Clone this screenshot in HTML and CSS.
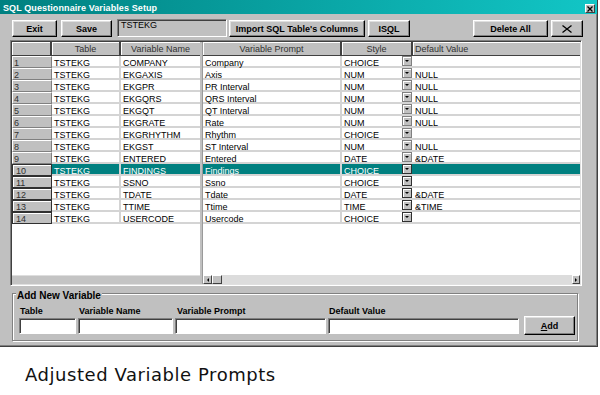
FILE: index.html
```html
<!DOCTYPE html>
<html lang="en">
  <head>
    <meta charset="UTF-8" />
    <title>SQL Questionnaire Variables Setup</title>
    <link rel="stylesheet" href="styles.css">
  </head>
  <body>
    <div class="window">
      <div class="titlebar">
        <span class="titlebar__text">SQL Questionnaire Variables Setup</span>
        <span class="titlebar__close">
          <svg width="6" height="6" viewBox="0 0 6 6"><path d="M0.5 0.5L5.5 5.5M5.5 0.5L0.5 5.5" stroke="#000" stroke-width="1.3"/></svg>
        </span>
      </div>

      <div class="toolbar">
        <button class="btn btn--exit" type="button">Exit</button>
        <button class="btn btn--save" type="button">Save</button>
        <div class="table-field">TSTEKG</div>
        <button class="btn btn--import" type="button">Import SQL Table's Columns</button>
        <button class="btn btn--isql" type="button">IS<u>Q</u>L</button>
        <button class="btn btn--delete" type="button">Delete All</button>
        <button class="btn btn--close" type="button">
          <svg width="10" height="8" viewBox="0 0 10 8"><path d="M0.5 0.5L9.5 7.5M9.5 0.5L0.5 7.5" stroke="#000" stroke-width="1.3"/></svg>
        </button>
      </div>

      <!-- variables grid: fixed left pane + scrolling right pane -->
      <div class="grid">
        <div class="pane pane--left">
          <div class="row row--head">
            <span class="hc c-rh"></span>
            <span class="hc c-tbl">Table</span>
            <span class="hc c-var">Variable Name</span>
          </div>
          <div class="row"><span class="rh">1</span><span class="cell c-tbl">TSTEKG</span><span class="cell c-var">COMPANY</span></div>
          <div class="row"><span class="rh">2</span><span class="cell c-tbl">TSTEKG</span><span class="cell c-var">EKGAXIS</span></div>
          <div class="row"><span class="rh">3</span><span class="cell c-tbl">TSTEKG</span><span class="cell c-var">EKGPR</span></div>
          <div class="row"><span class="rh">4</span><span class="cell c-tbl">TSTEKG</span><span class="cell c-var">EKGQRS</span></div>
          <div class="row"><span class="rh">5</span><span class="cell c-tbl">TSTEKG</span><span class="cell c-var">EKGQT</span></div>
          <div class="row"><span class="rh">6</span><span class="cell c-tbl">TSTEKG</span><span class="cell c-var">EKGRATE</span></div>
          <div class="row"><span class="rh">7</span><span class="cell c-tbl">TSTEKG</span><span class="cell c-var">EKGRHYTHM</span></div>
          <div class="row"><span class="rh">8</span><span class="cell c-tbl">TSTEKG</span><span class="cell c-var">EKGST</span></div>
          <div class="row"><span class="rh">9</span><span class="cell c-tbl">TSTEKG</span><span class="cell c-var">ENTERED</span></div>
          <div class="row row--sel"><span class="rh rh--on">10</span><span class="cell c-tbl">TSTEKG</span><span class="cell c-var">FINDINGS</span></div>
          <div class="row"><span class="rh rh--on">11</span><span class="cell c-tbl">TSTEKG</span><span class="cell c-var">SSNO</span></div>
          <div class="row"><span class="rh rh--on">12</span><span class="cell c-tbl">TSTEKG</span><span class="cell c-var">TDATE</span></div>
          <div class="row"><span class="rh rh--on">13</span><span class="cell c-tbl">TSTEKG</span><span class="cell c-var">TTIME</span></div>
          <div class="row"><span class="rh rh--on">14</span><span class="cell c-tbl">TSTEKG</span><span class="cell c-var">USERCODE</span></div>
          <div class="fill"></div>
          <div class="hscroll hscroll--plain"></div>
        </div>

        <div class="splitter"></div>

        <div class="pane pane--right">
          <div class="row row--head">
            <span class="hc c-prompt">Variable Prompt</span>
            <span class="hc c-style">Style</span>
            <span class="hc c-def">Default Value</span>
          </div>
          <div class="row"><span class="cell c-prompt">Company</span><span class="cell c-style">CHOICE<i class="dd"></i></span><span class="cell c-def"></span></div>
          <div class="row"><span class="cell c-prompt">Axis</span><span class="cell c-style">NUM<i class="dd"></i></span><span class="cell c-def">NULL</span></div>
          <div class="row"><span class="cell c-prompt">PR Interval</span><span class="cell c-style">NUM<i class="dd"></i></span><span class="cell c-def">NULL</span></div>
          <div class="row"><span class="cell c-prompt">QRS Interval</span><span class="cell c-style">NUM<i class="dd"></i></span><span class="cell c-def">NULL</span></div>
          <div class="row"><span class="cell c-prompt">QT Interval</span><span class="cell c-style">NUM<i class="dd"></i></span><span class="cell c-def">NULL</span></div>
          <div class="row"><span class="cell c-prompt">Rate</span><span class="cell c-style">NUM<i class="dd"></i></span><span class="cell c-def">NULL</span></div>
          <div class="row"><span class="cell c-prompt">Rhythm</span><span class="cell c-style">CHOICE<i class="dd"></i></span><span class="cell c-def"></span></div>
          <div class="row"><span class="cell c-prompt">ST Interval</span><span class="cell c-style">NUM<i class="dd"></i></span><span class="cell c-def">NULL</span></div>
          <div class="row"><span class="cell c-prompt">Entered</span><span class="cell c-style">DATE<i class="dd"></i></span><span class="cell c-def">&amp;DATE</span></div>
          <div class="row row--sel"><span class="cell c-prompt">Findings</span><span class="cell c-style">CHOICE<i class="dd dd--on"></i></span><span class="cell c-def"></span></div>
          <div class="row"><span class="cell c-prompt">Ssno</span><span class="cell c-style">CHOICE<i class="dd dd--on"></i></span><span class="cell c-def"></span></div>
          <div class="row"><span class="cell c-prompt">Tdate</span><span class="cell c-style">DATE<i class="dd dd--on"></i></span><span class="cell c-def">&amp;DATE</span></div>
          <div class="row"><span class="cell c-prompt">Ttime</span><span class="cell c-style">TIME<i class="dd dd--on"></i></span><span class="cell c-def">&amp;TIME</span></div>
          <div class="row"><span class="cell c-prompt">Usercode</span><span class="cell c-style">CHOICE<i class="dd dd--on"></i></span><span class="cell c-def"></span></div>
          <div class="fill"></div>
          <div class="hscroll">
            <span class="sb-btn sb-btn--left"></span>
            <span class="sb-thumb"></span>
            <span class="sb-track"></span>
            <span class="sb-btn sb-btn--right"></span>
          </div>
        </div>
      </div>

      <!-- add new variable group -->
      <div class="addvar">
        <div class="addvar__title">Add New Variable</div>
        <div class="addvar__fields">
          <div class="fld">
            <label class="fld__label" for="new-table">Table</label>
            <input id="new-table" class="fld__input fld__input--table" type="text" />
          </div>
          <div class="fld">
            <label class="fld__label" for="new-name">Variable Name</label>
            <input id="new-name" class="fld__input fld__input--name" type="text" />
          </div>
          <div class="fld">
            <label class="fld__label fld__label--prompt" for="new-prompt">Variable Prompt</label>
            <input id="new-prompt" class="fld__input fld__input--prompt" type="text" />
          </div>
          <div class="fld">
            <label class="fld__label" for="new-default">Default Value</label>
            <input id="new-default" class="fld__input fld__input--default" type="text" />
          </div>
          <button class="btn btn--add" type="button"><u>A</u>dd</button>
        </div>
      </div>
    </div>

    <p class="caption">Adjusted Variable Prompts</p>
  </body>
</html>
```

FILE: styles.css
```css
body {
  margin: 0;
  background-color: #ffffff;
  font-family: "Liberation Sans", Arial, sans-serif;
}

* {
  box-sizing: border-box;
}

.window {
  display: flex;
  flex-direction: column;
  width: 598px;
  height: 347px;
  background-color: #c0c0c0;
  border-right: 1px solid #404040;
  border-bottom: 1px solid #404040;
  box-shadow: inset -1px -1px #808080;
}

/* title bar */
.titlebar {
  display: flex;
  justify-content: space-between;
  align-items: flex-start;
  height: 14px;
  padding: 3px 2px 0 3px;
  background: linear-gradient(to right, #008080, #12c6c6);
  color: #ffffff;
  font-weight: bold;
  font-size: 9px;
  line-height: 11px;
  letter-spacing: 0.1px;
}

.titlebar__close {
  display: flex;
  align-items: center;
  justify-content: center;
  width: 10px;
  height: 9px;
  margin-top: 1px;
  background-color: #c0c0c0;
  border: 1px solid;
  border-color: #ffffff #404040 #404040 #ffffff;
}

/* toolbar */
.toolbar {
  display: flex;
  align-items: flex-start;
  height: 19px;
  margin-top: 5px;
  padding: 0 14px 0 12px;
}

.btn {
  display: flex;
  align-items: center;
  justify-content: center;
  height: 17px;
  margin: 1px 0 0 0;
  padding: 0;
  background-color: #c0c0c0;
  border: 1px solid;
  border-color: #ffffff #000000 #000000 #ffffff;
  box-shadow: inset -1px -1px #808080, inset 1px 1px #dfdfdf;
  color: #000000;
  font-family: "Liberation Sans", Arial, sans-serif;
  font-weight: bold;
  font-size: 9px;
  cursor: pointer;
}

.btn u {
  text-decoration-thickness: 1px;
}

.btn--exit {
  width: 45px;
}

.btn--save {
  width: 51px;
  margin-left: 4px;
}

.table-field {
  width: 110px;
  height: 18px;
  margin-left: 5px;
  padding: 1px 0 0 3px;
  border: 1px solid;
  border-color: #808080 #ffffff #ffffff #808080;
  box-shadow: inset 1px 1px #404040;
  color: #000000;
  font-size: 9px;
  line-height: 9px;
}

.btn--import {
  width: 136px;
  margin-left: 2px;
}

.btn--isql {
  width: 42px;
  margin-left: 3px;
}

.btn--delete {
  width: 75px;
  margin-left: auto;
}

.btn--close {
  width: 32px;
  margin-left: 3px;
}

/* grid */
.grid {
  display: flex;
  width: 572px;
  height: 246px;
  margin: 2px 0 0 10px;
  padding: 1px;
  background-color: #ffffff;
  border: 1px solid;
  border-color: #808080 #ffffff #ffffff #808080;
  box-shadow: inset 1px 1px #404040, inset -1px -1px #dfdfdf;
}

.pane {
  display: flex;
  flex-direction: column;
}

.pane--left {
  width: 188px;
}

.pane--right {
  width: 377px;
}

.splitter {
  width: 3px;
  background-color: #c0c0c0;
  box-shadow: inset -1px 0 #9a9a9a;
}

.row {
  display: flex;
  flex-shrink: 0;
  height: 12px;
}

.row--head {
  height: 14px;
}

.hc {
  height: 14px;
  background-color: #c0c0c0;
  border-right: 2px solid #404040;
  border-bottom: 1px solid #404040;
  box-shadow: inset 1px 1px #ffffff;
  color: #303030;
  font-size: 9px;
  line-height: 15px;
  text-align: center;
  white-space: nowrap;
}

.hc.c-style {
  display: block;
  border-right: 2px solid #404040;
}

.hc.c-def {
  text-align: left;
  padding-left: 2px;
  border-right: 0;
}

.cell {
  height: 12px;
  padding-left: 2px;
  border-right: 2px solid #d4d4d4;
  border-bottom: 2px solid #d4d4d4;
  color: #000000;
  font-size: 9px;
  line-height: 14px;
  white-space: nowrap;
}

.rh {
  width: 40px;
  height: 12px;
  padding-left: 1px;
  background-color: #c0c0c0;
  border: 1px solid;
  border-color: #ffffff #808080 #808080 #ffffff;
  color: #303030;
  font-size: 9px;
  line-height: 12px;
}

.rh--on {
  border-color: #303030;
  box-shadow: inset 1px 1px #ffffff;
  padding-left: 3px;
}

.c-rh {
  width: 40px;
}

.c-tbl {
  width: 69px;
}

.c-var {
  width: 79px;
  border-right: 0;
}

.c-prompt {
  width: 139px;
}

.c-style {
  display: flex;
  width: 71px;
  border-right: 0;
}

.c-def {
  width: 167px;
  border-right: 0;
}

.row--sel .cell {
  background-color: #008080;
  color: #ffffff;
}

.dd {
  display: flex;
  align-items: center;
  justify-content: center;
  width: 10px;
  height: 10px;
  margin: 0 1px 0 auto;
  background-color: #c0c0c0;
  border: 1px solid #808080;
  box-shadow: inset 1px 1px #ffffff;
}

.dd--on {
  border-color: #303030;
}

.dd::after {
  content: "";
  border-left: 2px solid transparent;
  border-right: 2px solid transparent;
  border-top: 2px solid #000000;
}

.fill {
  flex: 1;
  background-color: #ffffff;
}

/* scrollbars */
.hscroll {
  display: flex;
  flex-shrink: 0;
  height: 9px;
  background-color: #c0c0c0;
}

.hscroll--plain {
  background-color: #c4c4c4;
  box-shadow: inset 0 1px #dedede;
}

.sb-btn,
.sb-thumb {
  display: flex;
  align-items: center;
  justify-content: center;
  height: 9px;
  background-color: #c0c0c0;
  border: 1px solid;
  border-color: #ffffff #404040 #404040 #ffffff;
}

.sb-btn {
  width: 9px;
}

.sb-btn--right {
  width: 8px;
}

.sb-thumb {
  width: 10px;
}

.sb-btn--left::after {
  content: "";
  border-top: 2px solid transparent;
  border-bottom: 2px solid transparent;
  border-right: 2px solid #000000;
}

.sb-btn--right::after {
  content: "";
  border-top: 2px solid transparent;
  border-bottom: 2px solid transparent;
  border-left: 2px solid #000000;
}

.sb-track {
  flex: 1;
  background-color: #dcdcdc;
}

/* add new variable group */
.addvar {
  width: 566px;
  margin: 7px 0 0 12px;
  padding: 0 2px 6px 6px;
  border: 1px solid #808080;
  box-shadow: inset 1px 1px #ffffff, 1px 1px #ffffff;
}

.addvar__title {
  width: fit-content;
  margin: -4px 0 0 -3px;
  padding: 0 1px;
  background-color: #c0c0c0;
  color: #000000;
  font-weight: bold;
  font-size: 10px;
  line-height: 12px;
}

.addvar__fields {
  display: flex;
  align-items: flex-end;
  margin-top: 4px;
}

.fld {
  display: flex;
  flex-direction: column;
  margin-right: 2px;
}

.fld__label {
  margin-bottom: 1px;
  padding-left: 1px;
  color: #000000;
  font-weight: bold;
  font-size: 9px;
  line-height: 11px;
  white-space: nowrap;
}

.fld__label--prompt {
  padding-left: 2px;
}

.fld__input {
  height: 16px;
  padding: 0 2px;
  background-color: #ffffff;
  border: 1px solid;
  border-color: #808080 #ffffff #ffffff #808080;
  box-shadow: inset 1px 1px #404040;
  outline: none;
  font-size: 9px;
}

.fld__input--table {
  width: 57px;
}

.fld__input--name {
  width: 95px;
}

.fld__input--prompt {
  width: 151px;
}

.fld__input--default {
  width: 191px;
}

.btn--add {
  width: 51px;
  height: 19px;
  margin: 0 0 -1px 3px;
}

.caption {
  margin: 17px 0 0 25px;
  color: #111111;
  font-family: "DejaVu Sans", Verdana, sans-serif;
  font-size: 18px;
  line-height: 21px;
  letter-spacing: 0.55px;
}
```
